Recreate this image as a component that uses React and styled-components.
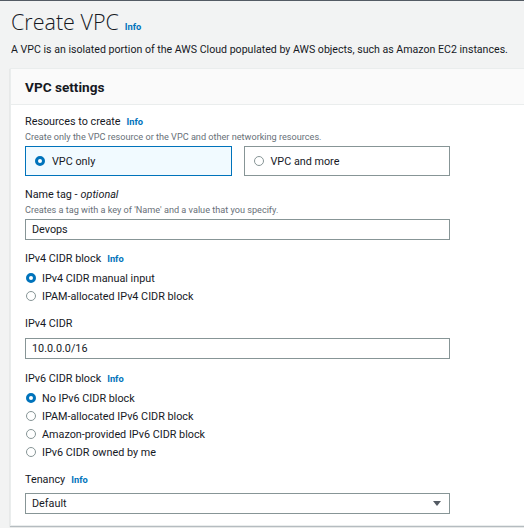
import React from "react";
import styled, { createGlobalStyle } from "styled-components";

const Global = createGlobalStyle`
  html, body { margin: 0; padding: 0; background: #f2f3f3; overflow: hidden; }
  body { font-family: Roboto, "Open Sans", Arial, sans-serif; color: #16191f; }
`;

const Page = styled.div`
  width: 524px;
  height: 528px;
  box-sizing: border-box;
  border-top: 1px solid #545b64;
  padding: 0 0 0 10px;
  overflow: hidden;
`;

const TitleRow = styled.div`
  display: flex;
  align-items: baseline;
  gap: 6px;
  margin-top: 4px;
  height: 34px;
`;

const Title = styled.h1`
  margin: 0;
  font-family: "Open Sans", sans-serif;
  font-size: 21.5px;
  font-weight: 300;
  line-height: 34px;
  color: #16191f;
  padding-left: 1px;
`;

const Info = styled.span`
  font-size: 9.3px;
  font-weight: 700;
  color: #0073bb;
  margin-left: ${(p) => p.$ml ?? 6}px;
`;

const Desc = styled.p`
  margin: 3px 0 0 1px;
  font-size: 10.6px;
  line-height: 16px;
  white-space: nowrap;
`;

const Panel = styled.section`
  margin-top: 10px;
  width: 540px;
  background: #fff;
  border: 1px solid #eaeded;
  box-shadow: 0 1px 1px rgba(0, 22, 40, 0.25);
`;

const PanelHeader = styled.div`
  background: #fafafa;
  border-bottom: 1px solid #eaeded;
  height: 35px;
  padding-left: 14px;
  display: flex;
  align-items: center;
`;

const PanelTitle = styled.h2`
  margin: 0;
  font-size: 13.6px;
  font-weight: 700;
`;

const Body = styled.div`
  width: 425px;
  padding: 9px 0 11px 14px;
`;

const Field = styled.div`
  margin-top: ${(p) => p.$mt || 0}px;
`;

const Label = styled.div`
  font-size: 10.8px;
  line-height: 16px;
  display: flex;
  align-items: baseline;
`;

const Optional = styled.i`
  font-style: italic;
  margin-left: 3px;
`;

const Helper = styled.div`
  font-size: 9.15px;
  line-height: 14px;
  color: #687078;
`;

const Tiles = styled.div`
  display: grid;
  grid-template-columns: 1fr 1fr;
  gap: 12px;
  margin-top: 2px;
`;

const Tile = styled.div`
  height: 30px;
  box-sizing: border-box;
  border: 1px solid ${(p) => (p.$on ? "#0073bb" : "#879596")};
  background: ${(p) => (p.$on ? "#f1faff" : "#fff")};
  display: flex;
  align-items: center;
  padding-left: 9px;
  gap: 7px;
  font-size: 10.8px;
`;

const Radio = styled.span`
  width: 10px;
  height: 10px;
  box-sizing: border-box;
  border-radius: 50%;
  flex: none;
  border: ${(p) => (p.$on ? "3px solid #0073bb" : "1px solid #879596")};
  background: #fff;
`;

const RadioList = styled.div`
  margin-top: 2px;
`;

const RadioRow = styled.div`
  height: 18px;
  display: flex;
  align-items: center;
  gap: 6px;
  font-size: 10.8px;
  padding-left: 1px;
`;

const Input = styled.div`
  margin-top: ${(p) => p.$mt || 2}px;
  height: 21px;
  box-sizing: border-box;
  border: 1px solid #879596;
  display: flex;
  align-items: center;
  padding: 0 6px;
  font-size: 10.8px;
  justify-content: space-between;
`;

const Caret = styled.span`
  width: 0;
  height: 0;
  border-left: 4px solid transparent;
  border-right: 4px solid transparent;
  border-top: 5px solid #545b64;
  margin-right: 2px;
`;

export default function App() {
  return (
    <>
      <Global />
      <Page>
        <TitleRow>
          <Title>Create VPC</Title>
          <Info $ml={0}>Info</Info>
        </TitleRow>
        <Desc>
          A VPC is an isolated portion of the AWS Cloud populated by AWS objects, such as Amazon EC2 instances.
        </Desc>
        <Panel>
          <PanelHeader>
            <PanelTitle>VPC settings</PanelTitle>
          </PanelHeader>
          <Body>
            <Field>
              <Label>
                Resources to create<Info>Info</Info>
              </Label>
              <Helper>Create only the VPC resource or the VPC and other networking resources.</Helper>
              <Tiles>
                <Tile $on>
                  <Radio $on />
                  VPC only
                </Tile>
                <Tile>
                  <Radio />
                  VPC and more
                </Tile>
              </Tiles>
            </Field>
            <Field $mt={11}>
              <Label>
                Name tag -<Optional>optional</Optional>
              </Label>
              <Helper>Creates a tag with a key of 'Name' and a value that you specify.</Helper>
              <Input>Devops</Input>
            </Field>
            <Field $mt={11}>
              <Label>
                IPv4 CIDR block<Info>Info</Info>
              </Label>
              <RadioList>
                <RadioRow>
                  <Radio $on />
                  IPv4 CIDR manual input
                </RadioRow>
                <RadioRow>
                  <Radio />
                  IPAM-allocated IPv4 CIDR block
                </RadioRow>
              </RadioList>
            </Field>
            <Field $mt={11}>
              <Label>IPv4 CIDR</Label>
              <Input $mt={6}>10.0.0.0/16</Input>
            </Field>
            <Field $mt={12}>
              <Label>
                IPv6 CIDR block<Info>Info</Info>
              </Label>
              <RadioList>
                <RadioRow>
                  <Radio $on />
                  No IPv6 CIDR block
                </RadioRow>
                <RadioRow>
                  <Radio />
                  IPAM-allocated IPv6 CIDR block
                </RadioRow>
                <RadioRow>
                  <Radio />
                  Amazon-provided IPv6 CIDR block
                </RadioRow>
                <RadioRow>
                  <Radio />
                  IPv6 CIDR owned by me
                </RadioRow>
              </RadioList>
            </Field>
            <Field $mt={11}>
              <Label>
                Tenancy<Info>Info</Info>
              </Label>
              <Input $mt={5}>
                Default
                <Caret />
              </Input>
            </Field>
          </Body>
        </Panel>
      </Page>
    </>
  );
}
